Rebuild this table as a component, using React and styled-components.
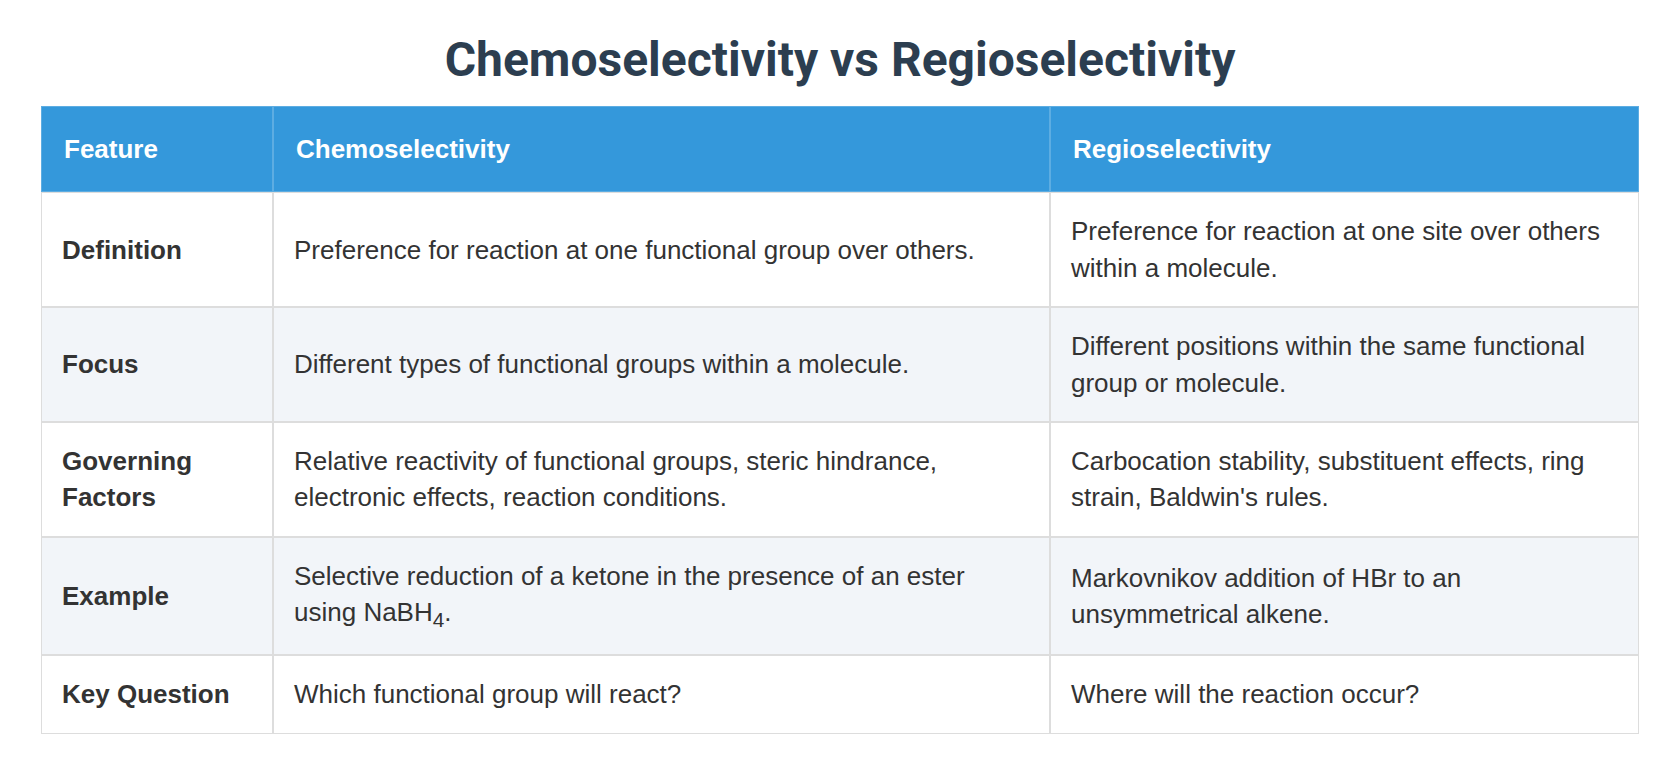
import React from "react";
import styled, { createGlobalStyle } from "styled-components";

const GlobalStyle = createGlobalStyle`
  body {
    margin: 0;
    background: #ffffff;
    font-family: "Liberation Sans", Arial, sans-serif;
    color: #333333;
  }
`;

const rows = [
  {
    feature: "Definition",
    chemo: "Preference for reaction at one functional group over others.",
    regio: "Preference for reaction at one site over others within a molecule.",
  },
  {
    feature: "Focus",
    chemo: "Different types of functional groups within a molecule.",
    regio: "Different positions within the same functional group or molecule.",
  },
  {
    feature: "Governing Factors",
    chemo:
      "Relative reactivity of functional groups, steric hindrance, electronic effects, reaction conditions.",
    regio: "Carbocation stability, substituent effects, ring strain, Baldwin's rules.",
  },
  {
    feature: "Example",
    chemo: (
      <>
        Selective reduction of a ketone in the presence of an ester using NaBH
        <sub>4</sub>.
      </>
    ),
    regio: "Markovnikov addition of HBr to an unsymmetrical alkene.",
  },
  {
    feature: "Key Question",
    chemo: "Which functional group will react?",
    regio: "Where will the reaction occur?",
  },
];

const App = () => {
  return (
    <Page>
      <GlobalStyle />
      <Title>Chemoselectivity vs Regioselectivity</Title>
      <Table>
        <colgroup>
          <Col $width="232px" />
          <Col $width="777px" />
          <Col />
        </colgroup>
        <thead>
          <tr>
            <HeadCell>Feature</HeadCell>
            <HeadCell>Chemoselectivity</HeadCell>
            <HeadCell>Regioselectivity</HeadCell>
          </tr>
        </thead>
        <tbody>
          {rows.map((row, i) => (
            <Row key={row.feature} $alt={i % 2 === 1}>
              <Cell $label>{row.feature}</Cell>
              <Cell>{row.chemo}</Cell>
              <Cell>{row.regio}</Cell>
            </Row>
          ))}
        </tbody>
      </Table>
    </Page>
  );
};

export default App;

const Page = styled.div`
  padding: 32px 41px 0;
  height: 778px;
  box-sizing: border-box;
`;

const Title = styled.h1`
  margin: 0 0 18px;
  text-align: center;
  font-family: Roboto, "Liberation Sans", sans-serif;
  font-weight: 700;
  font-size: 48px;
  line-height: 56px;
  color: #2c3e50;
`;

const Table = styled.table`
  width: 100%;
  table-layout: fixed;
  border-collapse: separate;
  border-spacing: 0;
  font-size: 26px;
  line-height: 1.4;
`;

const Col = styled.col`
  width: ${(p) => p.$width || "auto"};
`;

const HeadCell = styled.th`
  background: #3498db;
  color: #ffffff;
  font-weight: 700;
  text-align: left;
  padding: 24px 22px;
  border: 1px solid #5dade2;
`;

const Row = styled.tr`
  background: ${(p) => (p.$alt ? "#f2f5f9" : "#ffffff")};
`;

const Cell = styled.td`
  padding: 20px 20px;
  border: 1px solid #dddddd;
  vertical-align: middle;
  font-weight: ${(p) => (p.$label ? 700 : 400)};
  color: #333333;

  sub {
    font-size: 0.8em;
  }
`;
